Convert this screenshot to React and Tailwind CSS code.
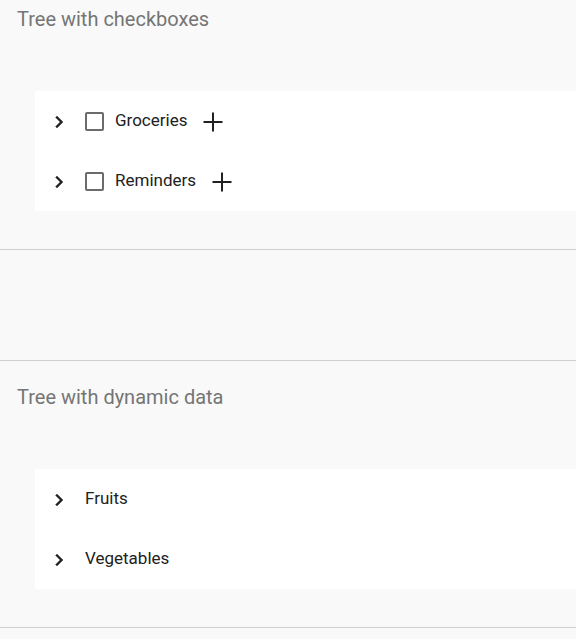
import React from 'react';

const Chevron = () => (
  <svg width="24" height="24" viewBox="0 0 24 24" className="text-[#212121] translate-y-[1px]">
    <path d="M10 6 8.59 7.41 13.17 12l-4.58 4.59L10 18l6-6z" fill="currentColor" stroke="currentColor" strokeWidth="0.4" />
  </svg>
);

const Plus = () => (
  <svg width="24" height="24" viewBox="0 0 24 24" className="text-[#212121] translate-y-[1px]">
    <path d="M12 2.5v19M2.5 12h19" stroke="currentColor" strokeWidth="2" fill="none" />
  </svg>
);

const TreeRow = ({ label, checkbox }) => (
  <div className="flex items-center h-[60px]">
    <button className="w-[48px] h-[48px] flex items-center justify-center shrink-0">
      <Chevron />
    </button>
    {checkbox && (
      <span className="ml-[2px] mr-[11px] w-[19px] h-[19px] border-2 border-[#6b6b6b] rounded-[2px] shrink-0" />
    )}
    <span className={`${checkbox ? '' : 'ml-[2px]'} text-[17px] text-[#212121]`}>{label}</span>
    {checkbox && (
      <span className="ml-[14px] flex items-center">
        <Plus />
      </span>
    )}
  </div>
);

const App = () => {
  return (
    <div className="min-h-screen bg-[#f9f9f9] overflow-hidden" style={{ fontFamily: 'Roboto, "Liberation Sans", sans-serif' }}>
      <section className="pt-[5px] pb-[38px] border-b border-[#cfcfcf]">
        <h3 className="px-[17px] text-[20px] leading-[28px] text-[#757575]">Tree with checkboxes</h3>
        <div className="mt-[58px] ml-[35px] bg-white">
          <TreeRow label="Groceries" checkbox />
          <TreeRow label="Reminders" checkbox />
        </div>
      </section>

      <section className="h-[111px] border-b border-[#cfcfcf]" />

      <section className="pt-[22px] pb-[38px] border-b border-[#cfcfcf]">
        <h3 className="px-[17px] text-[20px] leading-[28px] text-[#757575]">Tree with dynamic data</h3>
        <div className="mt-[58px] ml-[35px] bg-white">
          <TreeRow label="Fruits" />
          <TreeRow label="Vegetables" />
        </div>
      </section>
    </div>
  );
};

export default App;
